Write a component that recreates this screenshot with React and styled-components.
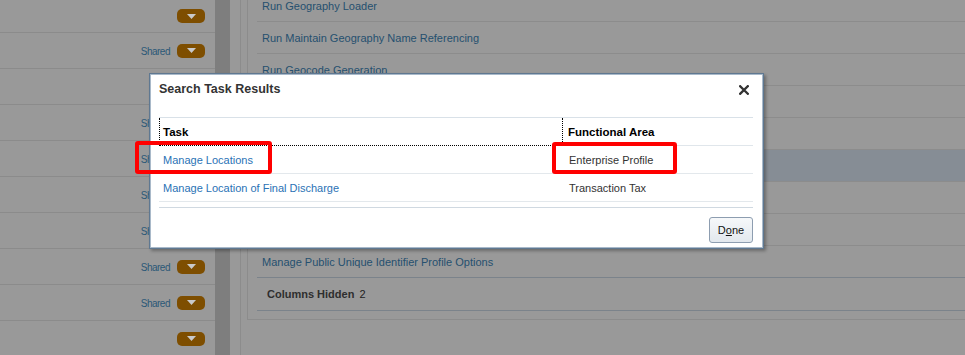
import styled, { createGlobalStyle } from "styled-components";

const GlobalStyle = createGlobalStyle`
  html, body {
    margin: 0;
    padding: 0;
    background: #999999;
  }
  body {
    font-family: "Liberation Sans", Arial, sans-serif;
  }
`;

const sideRows = [
  { badge: true },
  { shared: true, badge: true },
  { badge: true },
  { shared: true, badge: true },
  { shared: true, badge: true },
  { shared: true, badge: true },
  { shared: true, badge: true },
  { shared: true, badge: true },
  { shared: true, badge: true },
  { badge: true },
];

const taskRows = [
  "Run Geography Loader",
  "Run Maintain Geography Name Referencing",
  "Run Geocode Generation",
  "Manage Geographies",
  "Manage Address Formats",
  "Manage Locations",
  "Manage Location of Final Discharge",
  "Manage Territory Geography",
  "Manage Public Unique Identifier Profile Options",
];

const results = [
  { task: "Manage Locations", area: "Enterprise Profile" },
  { task: "Manage Location of Final Discharge", area: "Transaction Tax" },
];

const Caret = () => (
  <svg width="9" height="5" viewBox="0 0 9 5">
    <path d="M0 0 H9 L4.5 5 Z" fill="#c9c9c9" />
  </svg>
);

const CloseIcon = () => (
  <svg width="10" height="10" viewBox="0 0 10 10">
    <path
      d="M1.2 1.2 L8.8 8.8 M8.8 1.2 L1.2 8.8"
      stroke="#333"
      strokeWidth="2.3"
      strokeLinecap="square"
    />
  </svg>
);

export default function App() {
  return (
    <>
      <GlobalStyle />
      <Page>
        <Side>
          {sideRows.map((r, i) => (
            <SideRow key={i} $first={i === 0}>
              {r.shared && <Shared>Shared</Shared>}
              {r.badge && (
                <Badge>
                  <Caret />
                </Badge>
              )}
            </SideRow>
          ))}
        </Side>
        <Splitter />
        <Main>
          <TableBox>
            {taskRows.map((t, i) => (
              <TaskRow
                key={t}
                $selected={i === 5}
                $last={i === taskRows.length - 1}
              >
                {t}
              </TaskRow>
            ))}
            <Footer>
              Columns Hidden<Count>2</Count>
            </Footer>
          </TableBox>
        </Main>

        <Dialog>
          <TitleBar>
            <Title>Search Task Results</Title>
            <CloseButton>
              <CloseIcon />
            </CloseButton>
          </TitleBar>
          <Results>
            <HeadRow>
              <HeadCell $task>Task</HeadCell>
              <HeadCell>Functional Area</HeadCell>
            </HeadRow>
            {results.map((r) => (
              <ResultRow key={r.task}>
                <TaskCell>{r.task}</TaskCell>
                <AreaCell>{r.area}</AreaCell>
              </ResultRow>
            ))}
          </Results>
          <Divider />
          <ButtonBar>
            <DoneButton>
              D<u>o</u>ne
            </DoneButton>
          </ButtonBar>
        </Dialog>

        <Mark $x={135} $y={141} $w={137} $h={33} />
        <Mark $x={552} $y={142} $w={125} $h={32} />
      </Page>
    </>
  );
}

const Page = styled.div`
  position: relative;
  display: flex;
  width: 965px;
  height: 355px;
  overflow: hidden;
  background: #999999;
`;

const Side = styled.div`
  width: 215px;
  flex-shrink: 0;
  display: flex;
  flex-direction: column;
`;

const SideRow = styled.div`
  height: ${(p) => (p.$first ? "32px" : "35px")};
  flex-shrink: 0;
  display: flex;
  align-items: center;
  justify-content: flex-end;
  gap: 7px;
  padding-right: 10px;
  border-bottom: 1px solid #8b8b8b;
`;

const Shared = styled.span`
  font-size: 10px;
  letter-spacing: -0.5px;
  color: #2b5877;
  padding-top: 1px;
`;

const Badge = styled.span`
  width: 28px;
  height: 14px;
  border-radius: 5px;
  background: #7e4e00;
  display: flex;
  align-items: center;
  justify-content: center;
`;

const Splitter = styled.div`
  width: 15px;
  flex-shrink: 0;
  background: #7e7e7e;
`;

const Main = styled.div`
  flex: 1;
  margin-left: 10px;
  padding-left: 6px;
  border-left: 1px solid #8c8c8c;
`;

const TableBox = styled.div`
  margin-top: -10px;
  padding-left: 9px;
  padding-bottom: 8px;
  border-left: 1px solid #8c8c8c;
  border-bottom: 1px solid #8c8c8c;
`;

const TaskRow = styled.div`
  height: 31px;
  display: flex;
  align-items: center;
  padding-left: 5px;
  font-size: 11px;
  color: #25506f;
  white-space: nowrap;
  background: ${(p) => (p.$selected ? "#868d95" : "transparent")};
  border-bottom: ${(p) => (p.$last ? "none" : "1px solid #8c8c8c")};
`;

const Footer = styled.div`
  height: 32px;
  display: flex;
  align-items: center;
  padding-left: 10px;
  font-size: 11px;
  font-weight: bold;
  color: #2e2e2e;
  border-top: 1px solid #7b838b;
  border-bottom: 1px solid #7b838b;
`;

const Count = styled.span`
  margin-left: 5px;
  font-weight: normal;
  color: #1e1e1e;
`;

const Dialog = styled.div`
  position: absolute;
  left: 149px;
  top: 73px;
  width: 615px;
  height: 176px;
  box-sizing: border-box;
  background: #ffffff;
  border: 1px solid #5f7891;
  box-shadow: inset 0 0 0 1px #a9b9c9, 2px 2px 3px rgba(0, 0, 0, 0.3);
  padding: 1px 10px 0 9px;
  display: flex;
  flex-direction: column;
`;

const TitleBar = styled.div`
  height: 28px;
  display: flex;
  align-items: center;
  justify-content: space-between;
  padding-right: 4px;
`;

const Title = styled.h1`
  margin: 0;
  font-size: 12.5px;
  font-weight: bold;
  color: #333333;
`;

const CloseButton = styled.span`
  display: flex;
  margin-top: 2px;
`;

const Results = styled.div`
  margin-top: 14px;
  border-top: 1px solid #d9e1e8;
`;

const HeadRow = styled.div`
  display: flex;
  height: 28px;
`;

const HeadCell = styled.div`
  box-sizing: border-box;
  display: flex;
  align-items: center;
  font-size: 11.5px;
  font-weight: bold;
  color: #000000;
  ${(p) =>
    p.$task
      ? `
    width: 404px;
    padding-left: 3px;
    border: 1px dotted #000000;
    border-top: none;
  `
      : `
    flex: 1;
    padding-left: 5px;
    border-bottom: 1px solid #e0e6eb;
  `}
`;

const ResultRow = styled.div`
  display: flex;
  height: 28px;
  box-sizing: border-box;
  border-bottom: 1px solid #e3e8ec;
  font-size: 11px;
`;

const TaskCell = styled.div`
  width: 404px;
  box-sizing: border-box;
  padding-left: 4px;
  display: flex;
  align-items: center;
  color: #2a72b5;
`;

const AreaCell = styled.div`
  flex: 1;
  padding-left: 6px;
  display: flex;
  align-items: center;
  color: #333333;
`;

const Divider = styled.div`
  margin-top: 5px;
  height: 1px;
  background: #d0d9e1;
`;

const ButtonBar = styled.div`
  display: flex;
  justify-content: flex-end;
  margin-top: 9px;
`;

const DoneButton = styled.button`
  width: 44px;
  height: 26px;
  padding: 0;
  font-family: "Liberation Sans", Arial, sans-serif;
  font-size: 11px;
  color: #111111;
  border: 1px solid #8d9db0;
  border-radius: 3px;
  background: linear-gradient(#f6f8fa, #e2e8ee);
`;

const Mark = styled.div`
  position: absolute;
  left: ${(p) => p.$x}px;
  top: ${(p) => p.$y}px;
  width: ${(p) => p.$w}px;
  height: ${(p) => p.$h}px;
  box-sizing: border-box;
  border: 4px solid #ff0000;
  border-radius: 3px;
  pointer-events: none;
`;
